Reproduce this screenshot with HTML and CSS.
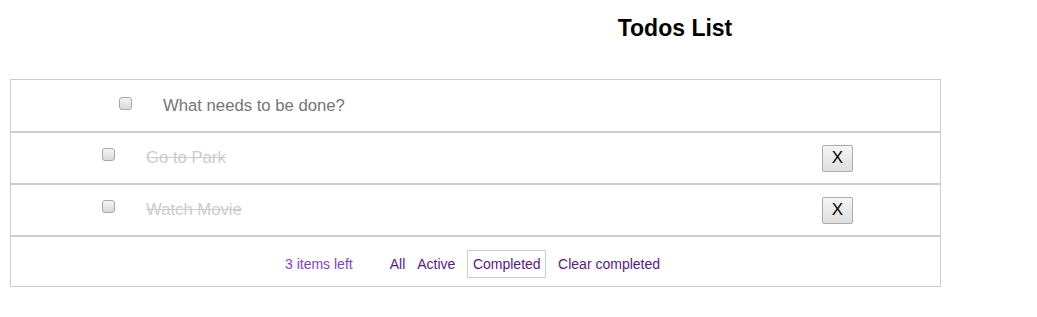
FILE: index.html
```html
<!DOCTYPE html>
<html lang="en">
<head>
<meta charset="utf-8">
<title>Todos List</title>
<link rel="stylesheet" href="styles.css">
</head>
<body>
<h1 class="title">Todos List</h1>
<section class="todoapp">
  <header class="row new-row">
    <input type="checkbox" class="toggle" aria-label="Toggle all">
    <input type="text" class="new-todo" placeholder="What needs to be done?">
  </header>
  <ul class="todo-list">
    <li class="row item completed">
      <input type="checkbox" class="toggle" aria-label="Toggle">
      <span class="label">Go to Park</span>
      <button class="destroy">X</button>
    </li>
    <li class="row item completed">
      <input type="checkbox" class="toggle" aria-label="Toggle">
      <span class="label">Watch Movie</span>
      <button class="destroy">X</button>
    </li>
  </ul>
  <footer class="row footer">
    <span class="count">3 items left</span>
    <ul class="filters">
      <li><a href="#all" class="filter">All</a></li>
      <li><a href="#active" class="filter">Active</a></li>
      <li><a href="#completed" class="filter selected">Completed</a></li>
    </ul>
    <a href="#clear" class="clear">Clear completed</a>
  </footer>
</section>
</body>
</html>
```
FILE: styles.css
```css
* { box-sizing: border-box; }

body {
  margin: 0;
  background: #ffffff;
  font-family: "Liberation Sans", Arial, sans-serif;
  color: #000;
}

.title {
  margin: 15px 0 0 313px;
  font-size: 23px;
  line-height: 26px;
  font-weight: bold;
  text-align: center;
}

.todoapp {
  margin: 38px 0 0 10px;
  width: 931px;
}

.row {
  display: flex;
  align-items: center;
  border: 1px solid #cccccc;
}

.todo-list {
  list-style: none;
  margin: 0;
  padding: 0;
}

.toggle {
  appearance: none;
  -webkit-appearance: none;
  width: 13px;
  height: 13px;
  margin: 0 0 5px 0;
  border: 1px solid #a8a8a8;
  border-radius: 3px;
  background: linear-gradient(#f4f4f4, #d9d9d9);
  flex: none;
}

.new-row {
  height: 53px;
  padding-left: 108px;
  gap: 31px;
}

.new-todo {
  border: none;
  outline: none;
  padding: 0;
  font-family: inherit;
  font-size: 16.7px;
  width: 400px;
  background: transparent;
}

.new-todo::placeholder {
  color: #757575;
}

.item {
  height: 52px;
  padding-left: 91px;
  padding-right: 87px;
  gap: 31px;
}

.item .toggle {
  margin-bottom: 8px;
}

.label {
  font-size: 16.7px;
  color: #cccccc;
  text-decoration: line-through;
}

.destroy {
  margin-left: auto;
  width: 31px;
  height: 27px;
  padding: 0;
  font-family: inherit;
  font-size: 17px;
  color: #000;
  border: 1px solid #adadad;
  border-radius: 2px;
  background: linear-gradient(#f5f5f5, #dedede);
}

.footer {
  height: 51px;
  padding: 5px 0 0 274px;
  font-size: 14px;
}

.count {
  color: #7e44c8;
}

.filters {
  display: flex;
  list-style: none;
  margin: 0 0 0 31px;
  padding: 0;
}

.filter {
  display: block;
  padding: 5px;
  border: 1px solid transparent;
  color: #551a8b;
  text-decoration: none;
  line-height: 16px;
}

.filters li + li .filter.selected {
  margin-left: 6px;
  padding: 5px 4.5px;
}

.filter.selected {
  border-color: #cccccc;
}

.clear {
  margin-left: 12px;
  color: #551a8b;
  text-decoration: none;
}
```
